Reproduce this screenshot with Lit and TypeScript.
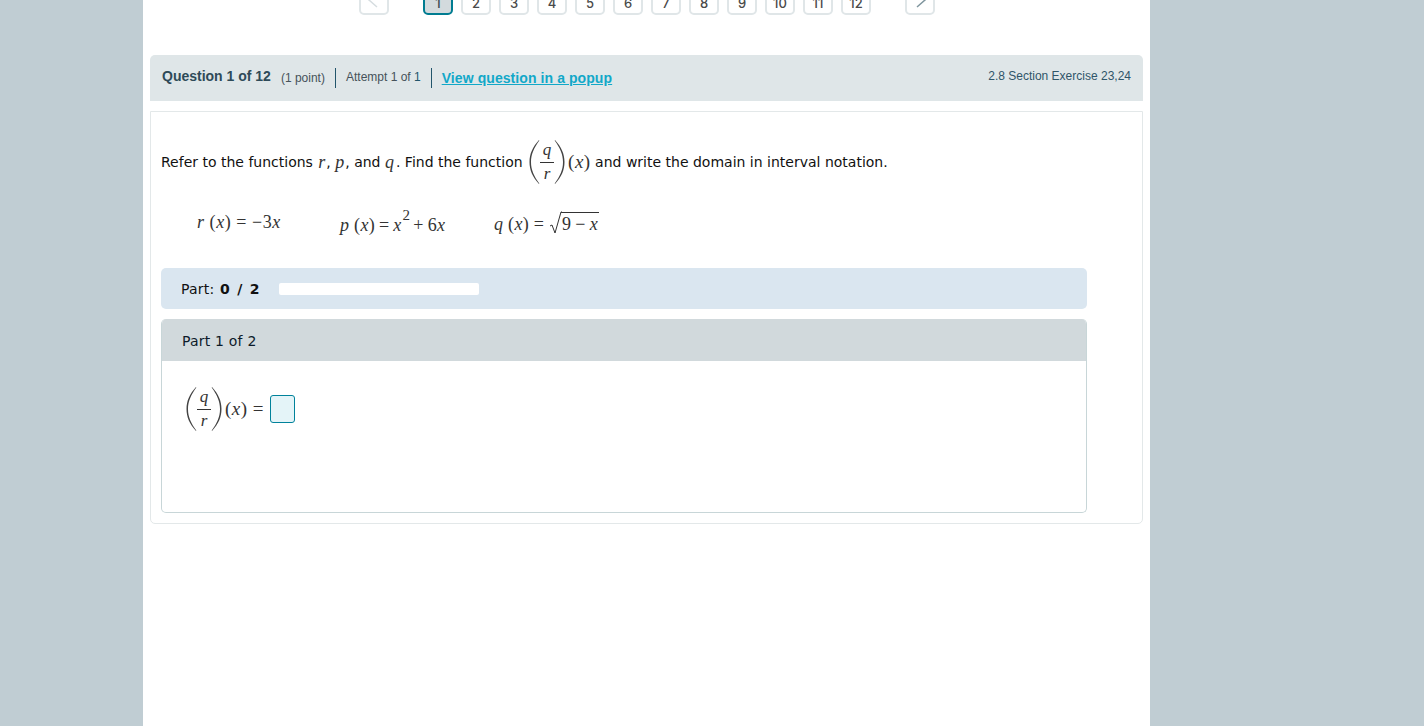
import { LitElement, html, css, svg } from "lit";
import { customElement } from "lit/decorators.js";

const paren = (flip: boolean) => html`<svg class=${flip ? "paren flip" : "paren"} width="12" height="46" viewBox="0 0 12 46">
  ${svg`<path d="M11 1 C4.5 8 1.5 15 1.5 23 C1.5 31 4.5 38 11 45 L11.3 44.6 C6 37 3 31 3 23 C3 15 6 9 11.3 1.4 Z" fill="#444"/>`}
</svg>`;

const frac = () => html`<span class="fracwrap">
  ${paren(false)}
  <span class="frac"><span class="num">q</span><span class="den">r</span></span>
  ${paren(true)}
</span>`;

@customElement("app-root")
export class AppRoot extends LitElement {
  static styles = css`
    :host { display: block; height: 726px; overflow: hidden; background: #c0cdd3; }
    .page { width: 1007px; height: 741px; margin: -15px 0 0 143px; background: #fff; box-sizing: border-box; padding: 0 7px; }
    .pager { display: flex; height: 30px; padding-left: 209px; }
    .pg { width: 30px; height: 30px; box-sizing: border-box; border: 2px solid #e0e6e8; border-radius: 5px; background: #fff;
      font: 500 13px/32px Inter, sans-serif; color: #4a4a4a; text-align: center; margin-right: 8px; display:flex; align-items:flex-start; justify-content:center; }
    .pg.on { background: #d3dadd; border-color: #007c91; color: #3d4a50; }
    .pg.prev { margin-right: 34px; }
    .pg.next { margin-left: 26px; margin-right: 0; }
    .pg svg { display: block; flex: none; }
    .hdr { margin-top: 40px; height: 46px; background: #dfe6e8; border-radius: 5px 5px 0 0; display: flex; align-items: center; padding: 0 12px; box-sizing: border-box;
      font-family: "Liberation Sans", Arial, sans-serif; color: #2e4a58; font-size: 12px; }
    .qtitle { font-weight: 700; font-size: 14px; margin-right: 10px; margin-top: -4px; color: #2e4a58; }
    .pt { color: #46525a; padding-right: 10px; margin-top: -1px; }
    .att { height: 20px; border-left: 1px solid #22556b; padding: 0 10px; line-height: 18px; color: #46525a; margin-top: 0; }
    .att b { font-weight: 400; color: #22556b; }
    .link { height: 20px; border-left: 1px solid #22556b; padding-left: 10px; font-size: 14px; letter-spacing: 0.08px; font-weight: 700; color: #12a8c8; text-decoration: underline; line-height: 21px; }
    .sp { flex: 1; }
    .sec { color: #2f5568; margin-top: -4px; }
    .card { margin-top: 10px; height: 413px; box-sizing: border-box; border: 1px solid #e3e8e9; border-radius: 0 0 5px 5px; padding: 0 10px; font-family: "DejaVu Sans", Verdana, sans-serif; font-size: 14px; color: #111; }
    .intro { display: flex; align-items: center; height: 46px; margin-top: 27px; white-space: pre; }
    .m { font-family: "Liberation Serif", "Times New Roman", serif; font-style: italic; font-size: 18px; color: #333; padding: 0 1px; }
    .m.vp { padding: 0 1px 0 0; }
    .m.vq { padding: 0 2px 0 0; }
    .mr { font-family: "Liberation Serif", "Times New Roman", serif; font-size: 19px; letter-spacing: 0.5px; color: #333; }
    .fracwrap { display: inline-flex; align-items: center; height: 46px; font-family: "Liberation Serif", serif; font-style: italic; font-size: 17px; color: #333; }
    .intro .fracwrap { margin-left: 1px; margin-right: 2px; }
    .paren { display: block; flex: none; }
    .paren.flip { transform: scaleX(-1); }
    .frac { display: inline-flex; flex-direction: column; align-items: center; width: 14px; }
    .num { border-bottom: 1px solid #333; width: 100%; text-align: center; line-height: 20px; height: 22px; }
    .den { line-height: 21px; }
    .defs { display: flex; height: 42px; margin-top: 26px; padding-left: 36px; font-family: "Liberation Serif", serif; font-size: 18px; color: #333; white-space: pre; }
    .def { height: 28px; line-height: 28px; }
    .def i { font-style: italic; }
    .d1 { width: 143px; margin-top: -3px; letter-spacing: 0.55px; }
    .d2 { width: 154px; margin-top: 0; letter-spacing: 0.3px; }
    .d3 { margin-top: -1px; letter-spacing: 0.3px; }
    .sq { font-size: 15px; line-height: 0; position: relative; top: -11px; vertical-align: baseline; margin-left: 1px; margin-right: -1px; }
    .root { border-top: 1px solid #333; display: inline-block; line-height: 22px; height: 22px; padding: 0 1px; }
    .rootsign { display: inline-block; vertical-align: -5px; margin-right: -1px; }
    .prog { margin-top: 15px; width: 926px; height: 41px; background: #dae6f0; border-radius: 5px; display: flex; align-items: center; padding-left: 20px; box-sizing: border-box; letter-spacing: 0.2px; }
    .prog b { font-weight: 700; letter-spacing: 1.3px; margin-left: 1px; }
    .bar { width: 200px; height: 12px; background: #fff; border-radius: 2px; margin-left: 18px; }
    .part { margin-top: 10px; width: 926px; height: 194px; box-sizing: border-box; border: 1px solid #c8d6d8; border-top: none; border-radius: 5px; overflow: hidden; }
    .ph { height: 42px; background: #d1d9dc; margin: 0 -1px; padding-left: 21px; line-height: 44px; color: #0d1b2a; letter-spacing: 0.2px; }
    .ans { display: flex; align-items: center; margin-top: 25px; padding-left: 23px; height: 46px; white-space: pre; }
    .ans .mr { margin-left: 2px; }
    .box { width: 25px; height: 28px; box-sizing: border-box; border: 1px solid #00829b; background: #e4f4f8; border-radius: 3px; margin-left: 6px; }
  `;

  render() {
    const nums = [1, 2, 3, 4, 5, 6, 7, 8, 9, 10, 11, 12];
    return html`<div class="page">
      <div class="pager">
        <div class="pg prev"><svg width="26" height="26" viewBox="0 0 26 26"><path d="M16 6 L8 13 L16 20" fill="none" stroke="#d6dde0" stroke-width="1.5"/></svg></div>
        ${nums.map((n, i) => html`<div class=${i === 0 ? "pg on" : "pg"}>${n}</div>`)}
        <div class="pg next"><svg width="26" height="26" viewBox="0 0 26 26"><path d="M10 6 L18 13 L10 20" fill="none" stroke="#7f959e" stroke-width="1.5"/></svg></div>
      </div>
      <div class="hdr">
        <span class="qtitle">Question 1 of 12</span>
        <span class="pt">(1 point)</span>
        <span class="att">Attempt 1 of <b>1</b></span>
        <a class="link">View question in a popup</a>
        <span class="sp"></span>
        <span class="sec">2.8 Section Exercise 23,24</span>
      </div>
      <div class="card">
        <div class="intro">Refer to the functions <span class="m">r</span>, <span class="m vp">p</span>, and <span class="m vq">q</span>. Find the function ${frac()}<span class="mr">(<i>x</i>)</span> and write the domain in interval notation.</div>
        <div class="defs">
          <div class="def d1"><i>r</i> (<i>x</i>) = −3<i>x</i></div>
          <div class="def d2"><i>p</i> (<i>x</i>)${"\u2009"}=${"\u2009"}<i>x</i><span class="sq">2</span>${"\u2009"}+${"\u2009"}6<i>x</i></div>
          <div class="def d3"><i>q</i> (<i>x</i>) = <svg class="rootsign" width="13" height="24" viewBox="0 0 13 24"><path d="M1 15 L3 14 L6 22 L12 1 L13 1" fill="none" stroke="#333" stroke-width="1"/></svg><span class="root">9${"\u2009"}−${"\u2009"}<i>x</i></span></div>
        </div>
        <div class="prog"><span>Part: <b>0 / 2</b></span><div class="bar"></div></div>
        <div class="part">
          <div class="ph">Part 1 of 2</div>
          <div class="ans">${frac()}<span class="mr">(<i>x</i>) =</span><div class="box"></div></div>
        </div>
      </div>
    </div>`;
  }
}
